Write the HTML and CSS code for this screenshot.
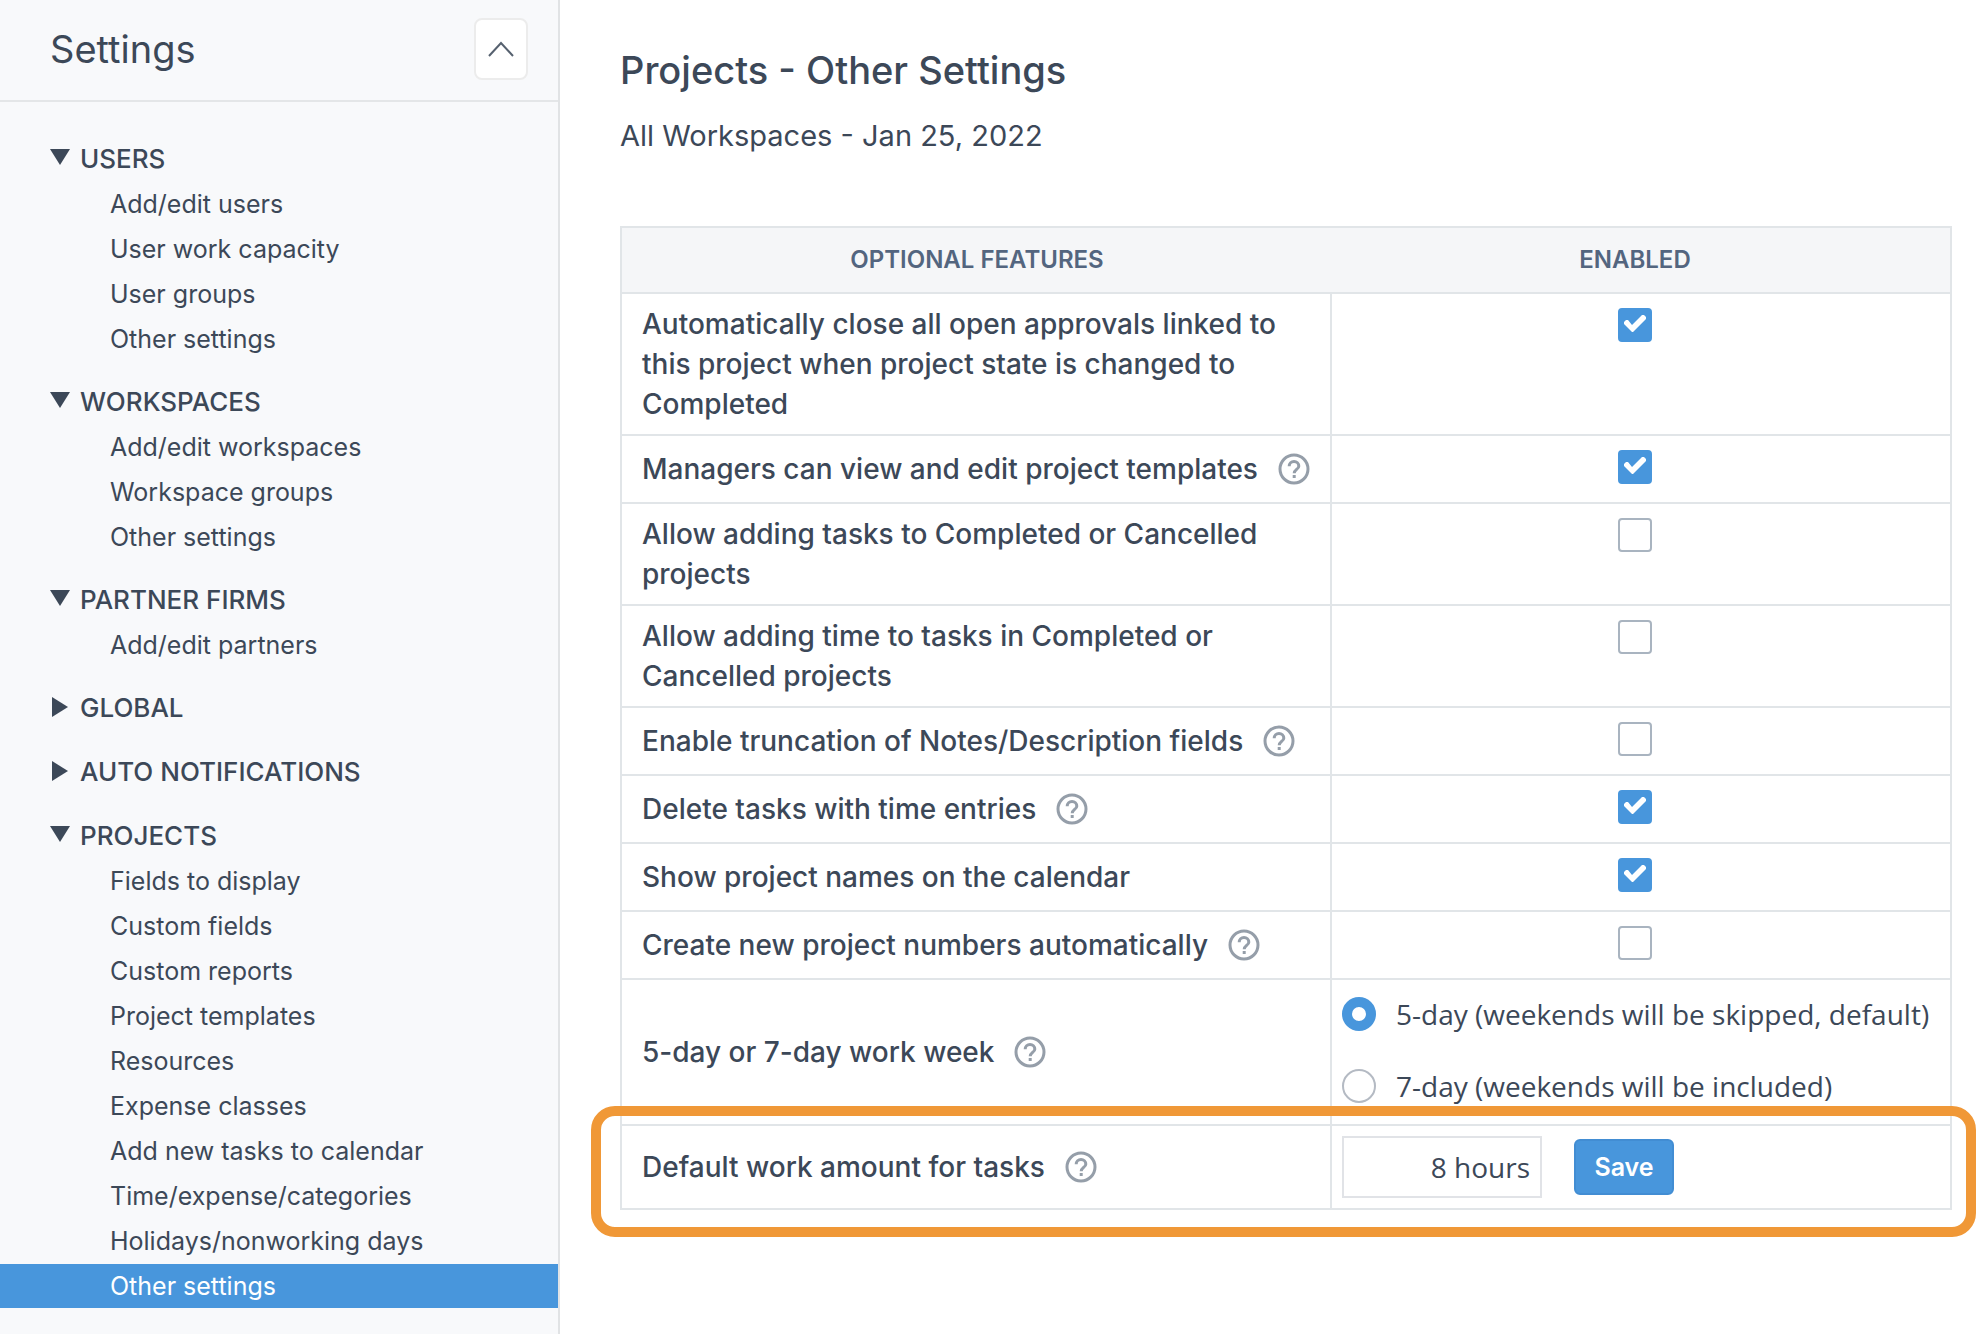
FILE: index.html
```html
<!DOCTYPE html>
<html lang="en">
<head>
<meta charset="UTF-8" />
<meta name="viewport" content="width=device-width, initial-scale=1" />
<title>Projects - Other Settings</title>
<link rel="stylesheet" href="styles.css">
</head>
<body>

<svg class="sprite" aria-hidden="true">
  <symbol id="icon-help" viewBox="0 0 32 32">
    <circle cx="16" cy="16" r="14" fill="none" stroke="currentColor" stroke-width="3" />
    <path d="M11.2 13.2 A4.8 4.8 0 0 1 20.8 13.2 C20.8 16.2 16.2 16.8 16.2 20.2" fill="none" stroke="currentColor" stroke-width="3" />
    <rect x="14.7" y="22" width="3" height="3" fill="currentColor" />
  </symbol>
</svg>

<aside class="sidebar">
  <header class="sidebar-header">
    <h2>Settings</h2>
    <button type="button" class="collapse-btn" aria-label="Collapse settings">
      <svg width="26" height="16" viewBox="0 0 26 16" aria-hidden="true"><path d="M1 15 L13 2 L25 15" fill="none" stroke="currentColor" stroke-width="2" /></svg>
    </button>
  </header>

  <nav aria-label="Settings">
    <section class="group">
      <h3><span class="arrow down"></span>USERS</h3>
      <ul>
        <li><a href="#">Add/edit users</a></li>
        <li><a href="#">User work capacity</a></li>
        <li><a href="#">User groups</a></li>
        <li><a href="#">Other settings</a></li>
      </ul>
    </section>
    <section class="group">
      <h3><span class="arrow down"></span>WORKSPACES</h3>
      <ul>
        <li><a href="#">Add/edit workspaces</a></li>
        <li><a href="#">Workspace groups</a></li>
        <li><a href="#">Other settings</a></li>
      </ul>
    </section>
    <section class="group">
      <h3><span class="arrow down"></span>PARTNER FIRMS</h3>
      <ul>
        <li><a href="#">Add/edit partners</a></li>
      </ul>
    </section>
    <section class="group collapsed">
      <h3><span class="arrow right"></span>GLOBAL</h3>
    </section>
    <section class="group collapsed">
      <h3><span class="arrow right"></span>AUTO NOTIFICATIONS</h3>
    </section>
    <section class="group">
      <h3><span class="arrow down"></span>PROJECTS</h3>
      <ul>
        <li><a href="#">Fields to display</a></li>
        <li><a href="#">Custom fields</a></li>
        <li><a href="#">Custom reports</a></li>
        <li><a href="#">Project templates</a></li>
        <li><a href="#">Resources</a></li>
        <li><a href="#">Expense classes</a></li>
        <li><a href="#">Add new tasks to calendar</a></li>
        <li><a href="#">Time/expense/categories</a></li>
        <li><a href="#">Holidays/nonworking days</a></li>
        <li><a href="#" class="active" aria-current="page">Other settings</a></li>
      </ul>
    </section>
  </nav>
</aside>

<main>
  <h1>Projects - Other Settings</h1>
  <p class="subtitle">All Workspaces - Jan 25, 2022</p>

  <div class="table-wrap">
    <table>
      <thead>
        <tr>
          <th>OPTIONAL FEATURES</th>
          <th>ENABLED</th>
        </tr>
      </thead>
      <tbody>
        <tr>
          <td><label for="closeApprovals">Automatically close all open approvals linked to this project when project state is changed to Completed</label></td>
          <td><input type="checkbox" id="closeApprovals" checked /></td>
        </tr>
        <tr>
          <td><div class="feature"><label for="editTemplates">Managers can view and edit project templates</label><svg class="help"><use href="#icon-help" /></svg></div></td>
          <td><input type="checkbox" id="editTemplates" checked /></td>
        </tr>
        <tr>
          <td><label for="addTasks">Allow adding tasks to Completed or Cancelled projects</label></td>
          <td><input type="checkbox" id="addTasks" /></td>
        </tr>
        <tr>
          <td><label for="addTime">Allow adding time to tasks in Completed or Cancelled projects</label></td>
          <td><input type="checkbox" id="addTime" /></td>
        </tr>
        <tr>
          <td><div class="feature"><label for="truncate">Enable truncation of Notes/Description fields</label><svg class="help"><use href="#icon-help" /></svg></div></td>
          <td><input type="checkbox" id="truncate" /></td>
        </tr>
        <tr>
          <td><div class="feature"><label for="deleteTasks">Delete tasks with time entries</label><svg class="help"><use href="#icon-help" /></svg></div></td>
          <td><input type="checkbox" id="deleteTasks" checked /></td>
        </tr>
        <tr>
          <td><label for="showNames">Show project names on the calendar</label></td>
          <td><input type="checkbox" id="showNames" checked /></td>
        </tr>
        <tr>
          <td><div class="feature"><label for="autoNumbers">Create new project numbers automatically</label><svg class="help"><use href="#icon-help" /></svg></div></td>
          <td><input type="checkbox" id="autoNumbers" /></td>
        </tr>
        <tr>
          <td><div class="feature"><span id="weekLabel">5-day or 7-day work week</span><svg class="help"><use href="#icon-help" /></svg></div></td>
          <td>
            <div class="radios" role="radiogroup" aria-labelledby="weekLabel">
              <label><input type="radio" name="week" value="5" checked />5-day (weekends will be skipped, default)</label>
              <label><input type="radio" name="week" value="7" />7-day (weekends will be included)</label>
            </div>
          </td>
        </tr>
        <tr>
          <td><div class="feature"><label for="workAmount">Default work amount for tasks</label><svg class="help"><use href="#icon-help" /></svg></div></td>
          <td class="amount-cell">
            <div class="amount">
              <input type="text" id="workAmount" value="8 hours" />
              <button type="button" class="save-btn">Save</button>
            </div>
          </td>
        </tr>
      </tbody>
    </table>
    <div class="highlight"></div>
  </div>
</main>

</body>
</html>
```
FILE: styles.css
```css
* { box-sizing: border-box; }
body { margin: 0; min-height: 100vh; display: flex; font-family: Inter, "Liberation Sans", sans-serif; color: #3c4858; background: #fff; }
h1, h2, h3, p, ul { margin: 0; padding: 0; }
.sprite { display: none; }

/* Sidebar */
.sidebar { flex: 0 0 560px; background: #f8f9fb; border-right: 2px solid #e1e3e5; }
.sidebar-header { height: 102px; padding: 0 30px 2px 50px; display: flex; align-items: center; justify-content: space-between; border-bottom: 2px solid #e4e6e8; }
.sidebar-header h2 { font-size: 38px; font-weight: 400; }
.collapse-btn { width: 54px; height: 62px; padding: 0; display: flex; align-items: center; justify-content: center; background: #fff; border: 2px solid #ececec; border-radius: 8px; color: #56616f; cursor: pointer; }
nav { padding-top: 34px; }
.group { margin-bottom: 18px; }
.group.collapsed { margin-bottom: 20px; }
.group h3 { display: flex; align-items: center; height: 44px; margin-bottom: 2px; padding-left: 50px; font-size: 26px; font-weight: 500; }
.group ul { display: grid; gap: 1px; list-style: none; }
.group a { display: block; padding-left: 110px; line-height: 44px; font-size: 25px; color: #3c4858; text-decoration: none; }
.group a.active { background: #4896dc; color: #fff; }
.arrow { flex: 0 0 20px; height: 20px; margin-right: 10px; background: #3c4858; }
.arrow.down { clip-path: polygon(0 1px, 100% 1px, 50% 17px); }
.arrow.right { clip-path: polygon(2px 0, 18px 50%, 2px 100%); }

/* Content */
main { flex: 1; min-width: 0; padding: 46px 36px 0 60px; }
h1 { font-size: 38px; line-height: 48px; font-weight: 500; }
.subtitle { margin: 22px 0 70px; font-size: 29px; line-height: 40px; }
.table-wrap { position: relative; }
table { width: 100%; table-layout: fixed; border-collapse: separate; border-spacing: 0; border: 2px solid #e1e5e8; border-bottom: 0; font-size: 28px; line-height: 40px; }
th { height: 66px; padding: 0 22px 0 10px; border-bottom: 2px solid #e1e5e8; background: #f5f6f8; color: #53657f; font-size: 24px; font-weight: 600; }
th:first-child { width: 710px; padding: 0 10px; }
td { padding: 14px 22px 18px 10px; border-bottom: 2px solid #e1e5e8; text-align: center; vertical-align: top; }
td:first-child { padding: 10px 16px 10px 20px; border-right: 2px solid #e1e5e8; text-align: left; vertical-align: middle; font-weight: 500; }
.feature { display: flex; align-items: center; gap: 20px; }
.help { flex: none; width: 32px; height: 32px; color: #959ea9; }

input[type="checkbox"], input[type="radio"] { appearance: none; display: block; flex: none; width: 34px; height: 34px; margin: 0 auto; border: 2px solid #a9b4c0; background: #fff; }
input[type="checkbox"] { border-radius: 4px; }
input[type="checkbox"]:checked { border-color: #4896dc; background: #4896dc; }
input[type="checkbox"]:checked::before { content: ""; display: block; width: 30px; height: 30px; background: #fff; clip-path: polygon(4px 14px, 4px 12px, 6px 10px, 8px 10px, 12px 15px, 22px 5px, 24px 5px, 26px 7px, 26px 9px, 13px 22px, 12px 22px); }
input[type="radio"] { margin: 0; border-color: #b4bac3; border-radius: 50%; }
input[type="radio"]:checked { border: 10px solid #4896dc; }

.radios { display: grid; gap: 32px; }
.radios label { display: flex; align-items: center; gap: 20px; font-family: "Open Sans", "Noto Sans", sans-serif; font-size: 28px; text-align: left; white-space: nowrap; }
td.amount-cell { padding: 10px 22px 10px 10px; }
.amount { display: flex; align-items: center; gap: 32px; }
.amount input { width: 200px; height: 62px; padding: 0 10px; border: 2px solid #e1e3e7; background: #fff; color: #3c4858; font-family: "Open Sans", "Noto Sans", sans-serif; font-size: 28px; text-align: right; }
.save-btn { width: 100px; height: 56px; padding: 0; border: 2px solid #428dd3; border-radius: 6px; background: #4896dc; color: #fff; font-family: inherit; font-size: 25px; font-weight: 600; cursor: pointer; }

/* Orange frame drawn over the last row */
.highlight { position: absolute; left: -29px; right: -24px; bottom: -27px; height: 131px; border: 10px solid #f09837; border-radius: 24px; pointer-events: none; }
```
